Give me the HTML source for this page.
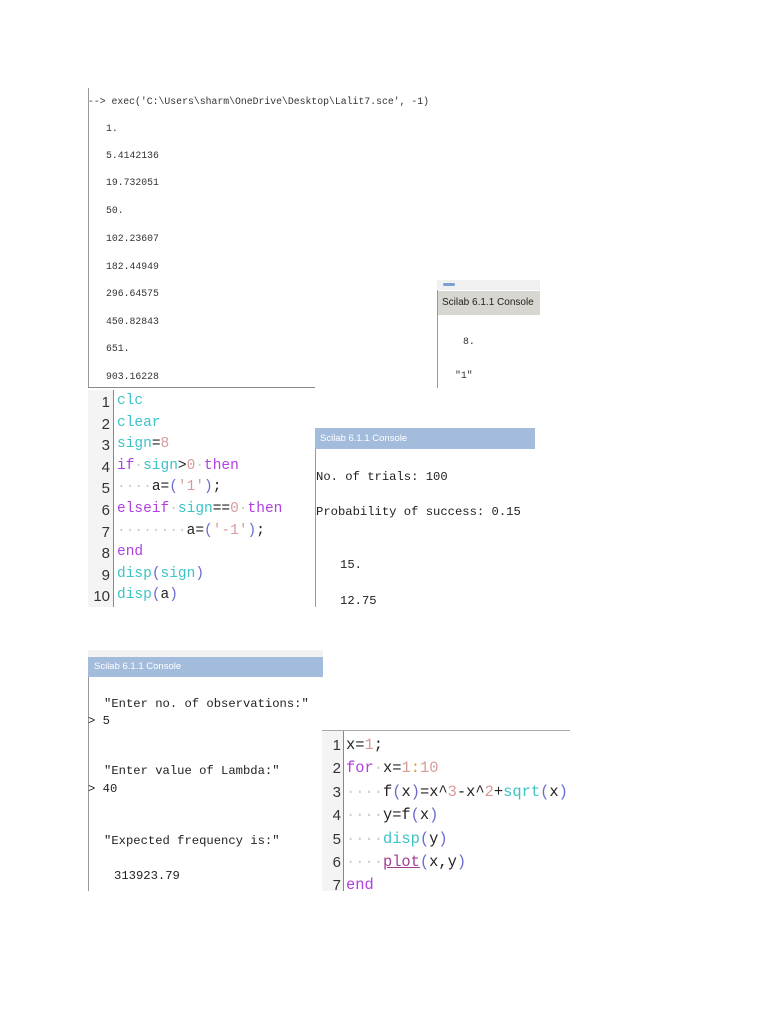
<!DOCTYPE html>
<html><head><meta charset="utf-8"><style>
body{margin:0;width:768px;height:1024px;background:#fff;position:relative;overflow:hidden;font-family:"Liberation Mono",monospace}
.a{position:absolute;white-space:pre}
.s{font-size:9.8px;color:#333}
.m{font-size:12.2px;color:#222}
.c{font-size:14.5px;color:#222}
.n{font-family:"Liberation Sans",sans-serif;font-size:15px;color:#333}
.t{font-family:"Liberation Sans",sans-serif;font-size:9.5px;color:#fff}
.cy{color:#3cc3c6}.pu{color:#b040e0}.pk{color:#d99a9a}.bl{color:#6a6ad0}.dt{color:#ccc}
</style></head><body>
<!-- top console -->
<div class="a" style="left:88px;top:88px;width:1px;height:300px;background:#999"></div>
<div class="a" style="left:88px;top:387px;width:227px;height:1px;background:#888"></div>
<div class="a s" style="left:88px;top:96px">--&gt; exec('C:\Users\sharm\OneDrive\Desktop\Lalit7.sce', -1)</div>
<div class="a s" style="left:106px;top:123px">1.</div>
<div class="a s" style="left:106px;top:150px">5.4142136</div>
<div class="a s" style="left:106px;top:177px">19.732051</div>
<div class="a s" style="left:106px;top:205px">50.</div>
<div class="a s" style="left:106px;top:233px">102.23607</div>
<div class="a s" style="left:106px;top:261px">182.44949</div>
<div class="a s" style="left:106px;top:288px">296.64575</div>
<div class="a s" style="left:106px;top:316px">450.82843</div>
<div class="a s" style="left:106px;top:343px">651.</div>
<div class="a s" style="left:106px;top:371px">903.16228</div>
<!-- small console -->
<div class="a" style="left:437px;top:280px;width:103px;height:10px;background:#f0f0f0"></div>
<div class="a" style="left:443px;top:283px;width:12px;height:3px;background:#7aa0d0;border-radius:2px"></div>
<div class="a" style="left:437px;top:291px;width:103px;height:24px;background:#d8d6d0"></div>
<div class="a" style="left:442px;top:297px;font-family:'Liberation Sans',sans-serif;font-size:10px;color:#222">Scilab 6.1.1 Console</div>
<div class="a" style="left:437px;top:290px;width:1px;height:98px;background:#999"></div>
<div class="a s" style="left:463px;top:336px">8.</div>
<div class="a s" style="left:455px;top:370px">"1"</div>
<!-- editor 1 -->
<div class="a" style="left:88px;top:390px;width:25px;height:217px;background:#f4f4f4"></div>
<div class="a" style="left:113px;top:390px;width:1px;height:217px;background:#888"></div>
<div class="a n" style="left:90px;top:392px;width:20px;text-align:right;line-height:21.6px;white-space:pre">1
2
3
4
5
6
7
8
9
10</div>
<div class="a c" style="left:117px;top:391px;line-height:21.6px"><span class="cy">clc</span>
<span class="cy">clear</span>
<span class="cy">sign</span>=<span class="pk">8</span>
<span class="pu">if</span><span class="dt">·</span><span class="cy">sign</span>&gt;<span class="pk">0</span><span class="dt">·</span><span class="pu">then</span>
<span class="dt">····</span>a=<span class="bl">(</span><span class="pk">'1'</span><span class="bl">)</span>;
<span class="pu">elseif</span><span class="dt">·</span><span class="cy">sign</span>==<span class="pk">0</span><span class="dt">·</span><span class="pu">then</span>
<span class="dt">········</span>a=<span class="bl">(</span><span class="pk">'-1'</span><span class="bl">)</span>;
<span class="pu">end</span>
<span class="cy">disp</span><span class="bl">(</span><span class="cy">sign</span><span class="bl">)</span>
<span class="cy">disp</span><span class="bl">(</span>a<span class="bl">)</span></div>
<!-- console 2 -->
<div class="a" style="left:315px;top:428px;width:220px;height:21px;background:#a3bcdc"></div>
<div class="a t" style="left:320px;top:433px">Scilab 6.1.1 Console</div>
<div class="a" style="left:315px;top:449px;width:1px;height:158px;background:#999"></div>
<div class="a m" style="left:316px;top:470px">No. of trials: 100</div>
<div class="a m" style="left:316px;top:505px">Probability of success: 0.15</div>
<div class="a m" style="left:340px;top:558px">15.</div>
<div class="a m" style="left:340px;top:594px">12.75</div>
<!-- console 3 -->
<div class="a" style="left:88px;top:650px;width:235px;height:7px;background:#f2f2f2"></div>
<div class="a" style="left:88px;top:657px;width:235px;height:20px;background:#a3bcdc"></div>
<div class="a t" style="left:94px;top:661px">Scilab 6.1.1 Console</div>
<div class="a" style="left:88px;top:677px;width:1px;height:214px;background:#999"></div>
<div class="a m" style="left:104px;top:697px">"Enter no. of observations:"</div>
<div class="a m" style="left:88px;top:714px">&gt; 5</div>
<div class="a m" style="left:104px;top:764px">"Enter value of Lambda:"</div>
<div class="a m" style="left:88px;top:782px">&gt; 40</div>
<div class="a m" style="left:104px;top:834px">"Expected frequency is:"</div>
<div class="a m" style="left:114px;top:869px">313923.79</div>
<!-- editor 2 -->
<div class="a" style="left:322px;top:730px;width:248px;height:1px;background:#aaa"></div>
<div class="a" style="left:322px;top:731px;width:21px;height:160px;background:#f4f4f4"></div>
<div class="a" style="left:343px;top:731px;width:1px;height:160px;background:#888"></div>
<div class="a n" style="left:324px;top:734px;width:17px;text-align:right;line-height:23.4px">1
2
3
4
5
6
7</div>
<div class="a c" style="left:346px;top:734px;line-height:23.4px;font-size:15.4px">x=<span class="pk">1</span>;
<span class="pu">for</span><span class="dt">·</span>x=<span class="pk">1</span><span style="color:#e0a020">:</span><span class="pk">10</span>
<span class="dt">····</span>f<span class="bl">(</span>x<span class="bl">)</span>=x^<span class="pk">3</span>-x^<span class="pk">2</span>+<span class="cy">sqrt</span><span class="bl">(</span>x<span class="bl">)</span>
<span class="dt">····</span>y=f<span class="bl">(</span>x<span class="bl">)</span>
<span class="dt">····</span><span class="cy">disp</span><span class="bl">(</span>y<span class="bl">)</span>
<span class="dt">····</span><span style="color:#a04090;text-decoration:underline">plot</span><span class="bl">(</span>x,y<span class="bl">)</span>
<span class="pu">end</span></div>
</body></html>
